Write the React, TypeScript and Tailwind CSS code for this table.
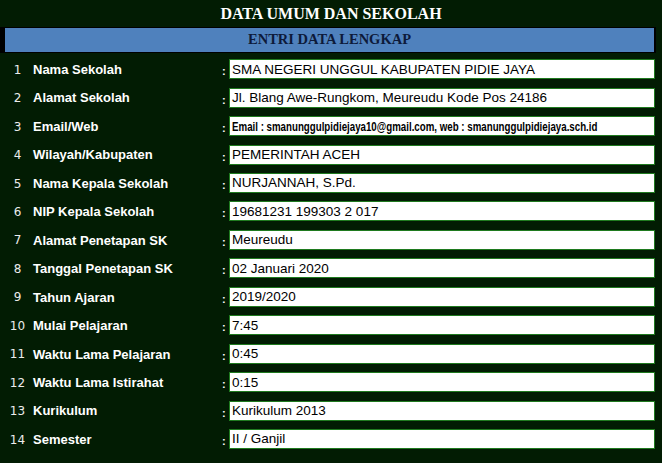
const rows: { label: string; value: string; small?: boolean }[] = [
  { label: "Nama Sekolah", value: "SMA NEGERI UNGGUL KABUPATEN PIDIE JAYA" },
  { label: "Alamat Sekolah", value: "Jl. Blang Awe-Rungkom, Meureudu Kode Pos 24186" },
  {
    label: "Email/Web",
    value: "Email : smanunggulpidiejaya10@gmail.com, web : smanunggulpidiejaya.sch.id",
    small: true,
  },
  { label: "Wilayah/Kabupaten", value: "PEMERINTAH ACEH" },
  { label: "Nama Kepala Sekolah", value: "NURJANNAH, S.Pd." },
  { label: "NIP Kepala Sekolah", value: "19681231 199303 2 017" },
  { label: "Alamat Penetapan SK", value: "Meureudu" },
  { label: "Tanggal Penetapan SK", value: "02 Januari 2020" },
  { label: "Tahun Ajaran", value: "2019/2020" },
  { label: "Mulai Pelajaran", value: "7:45" },
  { label: "Waktu Lama Pelajaran", value: "0:45" },
  { label: "Waktu Lama Istirahat", value: "0:15" },
  { label: "Kurikulum", value: "Kurikulum 2013" },
  { label: "Semester", value: "II / Ganjil" },
];

export default function App() {
  return (
    <div className="flex h-[463px] w-[662px] flex-col overflow-hidden bg-[#021c03] font-['Liberation_Sans',Arial,sans-serif]">
      <div className="flex h-[27px] items-center justify-center font-['Liberation_Serif','Times_New_Roman',serif] text-[16px] font-bold text-white">
        DATA UMUM DAN SEKOLAH
      </div>

      <div className="flex h-[26px] w-[656px] items-center justify-center border-y border-r-2 border-l-[5px] border-black bg-[#4f81bd] font-['Liberation_Serif','Times_New_Roman',serif] text-[14.5px] font-bold text-[#0d1a3a]">
        ENTRI DATA LENGKAP
      </div>

      <div className="mt-[2px] flex flex-col">
        {rows.map((row, i) => (
          <div key={row.label} className="flex h-[28.46px] items-center">
            <div className="w-[33px] pl-[2px] pt-[1px] text-center font-['DejaVu_Sans',sans-serif] text-[12px] text-[#ececec]">
              {i + 1}
            </div>
            <div className="w-[188px] pt-[1px] text-[13px] font-bold text-white">{row.label}</div>
            <div className="w-[8px] pl-[1px] pt-[5px] text-[11px] font-bold leading-none text-white">:</div>
            <div className="flex h-[20px] w-[426px] items-center border border-[#1f7a1f] bg-white pl-[2px] pt-[1px] text-black">
              {row.small ? (
                <span className="origin-left scale-x-[0.81] whitespace-nowrap text-[12px] font-bold">
                  {row.value}
                </span>
              ) : (
                <span className="whitespace-nowrap text-[13.5px]">{row.value}</span>
              )}
            </div>
          </div>
        ))}
      </div>
    </div>
  );
}
